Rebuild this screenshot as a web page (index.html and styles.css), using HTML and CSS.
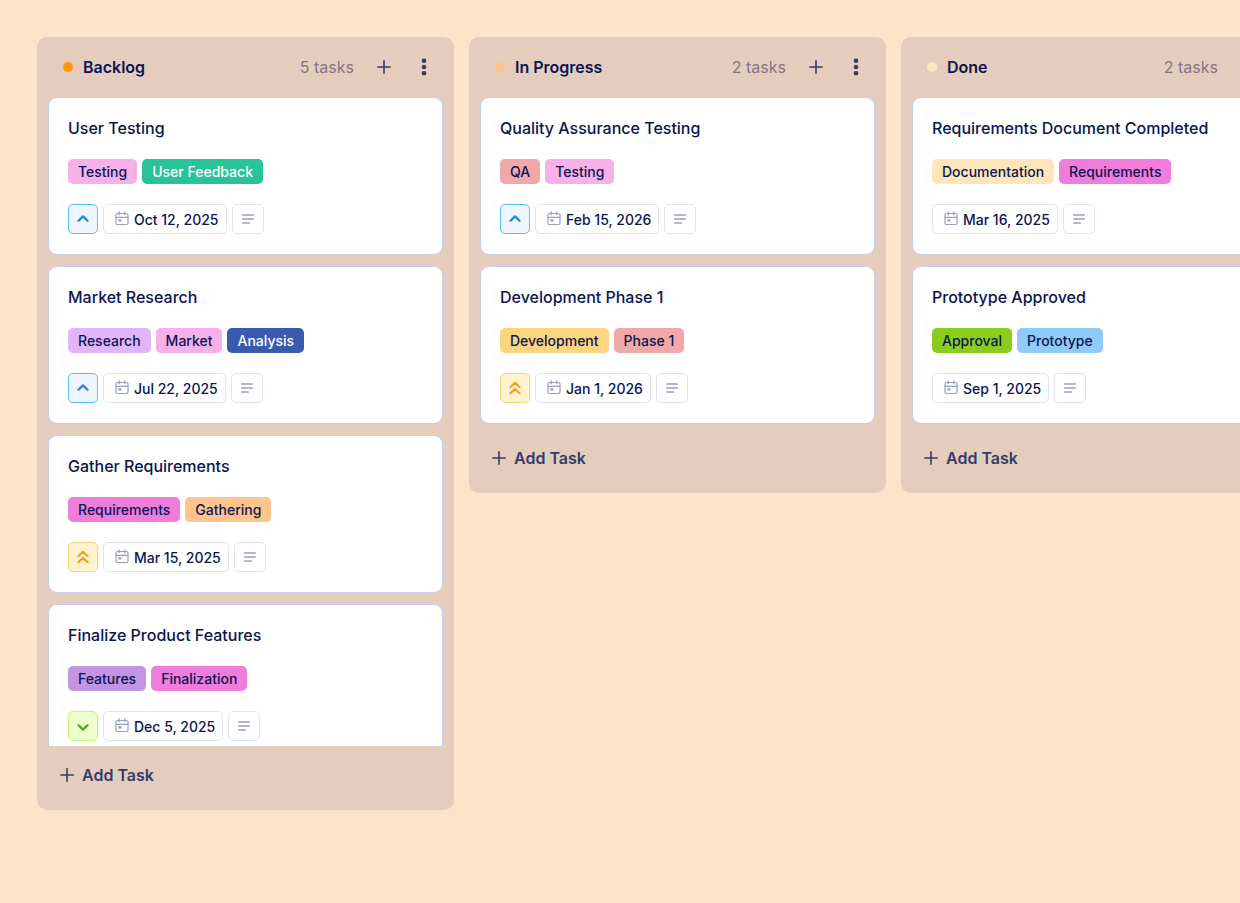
FILE: index.html
```html
<!DOCTYPE html>
<html lang="en">
<head>
    <meta charset="UTF-8">
    <meta name="viewport" content="width=device-width, initial-scale=1.0">
    <title>Task Board</title>
    <link rel="stylesheet" href="styles.css">
</head>
<body>
    <!-- shared icons -->
    <svg class="sprite" aria-hidden="true">
        <symbol id="plus" viewBox="0 0 14 14"><path d="M7 .8v12.4M.8 7h12.4" stroke="currentColor" stroke-width="1.6" stroke-linecap="round"/></symbol>
        <symbol id="dots" viewBox="0 0 6 18"><g fill="currentColor"><circle cx="3" cy="2.8" r="2.3"/><circle cx="3" cy="9" r="2.3"/><circle cx="3" cy="15.2" r="2.3"/></g></symbol>
        <symbol id="up" viewBox="0 0 14 14"><path d="M2.5 8.7 7 4.4l4.5 4.3" fill="none" stroke="currentColor" stroke-width="2.2" stroke-linecap="round" stroke-linejoin="round"/></symbol>
        <symbol id="down" viewBox="0 0 14 14"><path d="M2.5 6.3 7 10.6l4.5-4.3" fill="none" stroke="currentColor" stroke-width="2.2" stroke-linecap="round" stroke-linejoin="round"/></symbol>
        <symbol id="double-up" viewBox="0 0 14 14"><path d="M2.4 6.1 7 1.8l4.6 4.3M2.4 12.3 7 8l4.6 4.3" fill="none" stroke="currentColor" stroke-width="1.9" stroke-linecap="round" stroke-linejoin="round"/></symbol>
        <symbol id="calendar" viewBox="0 0 14 16"><g fill="none" stroke="currentColor" stroke-width="1.2" stroke-linecap="round"><rect x="1" y="2.5" width="12" height="11" rx="1.5"/><path d="M1 6.3h12M4.2 .8v3M9.8 .8v3"/></g><rect x="3.3" y="8.2" width="3.2" height="2.3" rx=".6" fill="currentColor"/></symbol>
        <symbol id="note" viewBox="0 0 12 10"><path d="M.6 1h10.8M.6 5h10.8M.6 9h6.8" stroke="currentColor" stroke-width="1.3" stroke-linecap="round"/></symbol>
    </svg>

    <main class="board">
        <section class="column">
            <header class="column-header">
                <span class="dot dot-backlog"></span>
                <h2>Backlog</h2>
                <span class="count">5 tasks</span>
                <button class="icon-btn" aria-label="Add task"><svg class="icon-plus"><use href="#plus"/></svg></button>
                <button class="icon-btn" aria-label="Column menu"><svg class="icon-dots"><use href="#dots"/></svg></button>
            </header>
            <div class="list">
                <article class="card">
                    <h3>User Testing</h3>
                    <div class="tags">
                        <span class="tag pink">Testing</span>
                        <span class="tag green">User Feedback</span>
                    </div>
                    <div class="meta">
                        <button class="priority medium" aria-label="Medium priority"><svg><use href="#up"/></svg></button>
                        <button class="date"><svg><use href="#calendar"/></svg>Oct 12, 2025</button>
                        <button class="note" aria-label="Description"><svg><use href="#note"/></svg></button>
                    </div>
                </article>
                <article class="card">
                    <h3>Market Research</h3>
                    <div class="tags">
                        <span class="tag lilac">Research</span>
                        <span class="tag pink">Market</span>
                        <span class="tag blue">Analysis</span>
                    </div>
                    <div class="meta">
                        <button class="priority medium" aria-label="Medium priority"><svg><use href="#up"/></svg></button>
                        <button class="date"><svg><use href="#calendar"/></svg>Jul 22, 2025</button>
                        <button class="note" aria-label="Description"><svg><use href="#note"/></svg></button>
                    </div>
                </article>
                <article class="card">
                    <h3>Gather Requirements</h3>
                    <div class="tags">
                        <span class="tag magenta">Requirements</span>
                        <span class="tag orange">Gathering</span>
                    </div>
                    <div class="meta">
                        <button class="priority high" aria-label="High priority"><svg><use href="#double-up"/></svg></button>
                        <button class="date"><svg><use href="#calendar"/></svg>Mar 15, 2025</button>
                        <button class="note" aria-label="Description"><svg><use href="#note"/></svg></button>
                    </div>
                </article>
                <article class="card">
                    <h3>Finalize Product Features</h3>
                    <div class="tags">
                        <span class="tag purple">Features</span>
                        <span class="tag magenta">Finalization</span>
                    </div>
                    <div class="meta">
                        <button class="priority low" aria-label="Low priority"><svg><use href="#down"/></svg></button>
                        <button class="date"><svg><use href="#calendar"/></svg>Dec 5, 2025</button>
                        <button class="note" aria-label="Description"><svg><use href="#note"/></svg></button>
                    </div>
                </article>
            </div>
            <footer class="column-footer">
                <button class="add-btn"><svg class="icon-plus"><use href="#plus"/></svg>Add Task</button>
            </footer>
        </section>

        <section class="column">
            <header class="column-header">
                <span class="dot dot-progress"></span>
                <h2>In Progress</h2>
                <span class="count">2 tasks</span>
                <button class="icon-btn" aria-label="Add task"><svg class="icon-plus"><use href="#plus"/></svg></button>
                <button class="icon-btn" aria-label="Column menu"><svg class="icon-dots"><use href="#dots"/></svg></button>
            </header>
            <div class="list">
                <article class="card">
                    <h3>Quality Assurance Testing</h3>
                    <div class="tags">
                        <span class="tag salmon">QA</span>
                        <span class="tag pink">Testing</span>
                    </div>
                    <div class="meta">
                        <button class="priority medium" aria-label="Medium priority"><svg><use href="#up"/></svg></button>
                        <button class="date"><svg><use href="#calendar"/></svg>Feb 15, 2026</button>
                        <button class="note" aria-label="Description"><svg><use href="#note"/></svg></button>
                    </div>
                </article>
                <article class="card">
                    <h3>Development Phase 1</h3>
                    <div class="tags">
                        <span class="tag yellow">Development</span>
                        <span class="tag salmon">Phase 1</span>
                    </div>
                    <div class="meta">
                        <button class="priority high" aria-label="High priority"><svg><use href="#double-up"/></svg></button>
                        <button class="date"><svg><use href="#calendar"/></svg>Jan 1, 2026</button>
                        <button class="note" aria-label="Description"><svg><use href="#note"/></svg></button>
                    </div>
                </article>
            </div>
            <footer class="column-footer">
                <button class="add-btn"><svg class="icon-plus"><use href="#plus"/></svg>Add Task</button>
            </footer>
        </section>

        <section class="column">
            <header class="column-header">
                <span class="dot dot-done"></span>
                <h2>Done</h2>
                <span class="count">2 tasks</span>
                <button class="icon-btn" aria-label="Add task"><svg class="icon-plus"><use href="#plus"/></svg></button>
                <button class="icon-btn" aria-label="Column menu"><svg class="icon-dots"><use href="#dots"/></svg></button>
            </header>
            <div class="list">
                <article class="card">
                    <h3>Requirements Document Completed</h3>
                    <div class="tags">
                        <span class="tag cream">Documentation</span>
                        <span class="tag magenta">Requirements</span>
                    </div>
                    <div class="meta">
                        <button class="date"><svg><use href="#calendar"/></svg>Mar 16, 2025</button>
                        <button class="note" aria-label="Description"><svg><use href="#note"/></svg></button>
                    </div>
                </article>
                <article class="card">
                    <h3>Prototype Approved</h3>
                    <div class="tags">
                        <span class="tag lime">Approval</span>
                        <span class="tag sky">Prototype</span>
                    </div>
                    <div class="meta">
                        <button class="date"><svg><use href="#calendar"/></svg>Sep 1, 2025</button>
                        <button class="note" aria-label="Description"><svg><use href="#note"/></svg></button>
                    </div>
                </article>
            </div>
            <footer class="column-footer">
                <button class="add-btn"><svg class="icon-plus"><use href="#plus"/></svg>Add Task</button>
            </footer>
        </section>
    </main>
</body>
</html>
```
FILE: styles.css
```css
* {
    box-sizing: border-box;
}

body {
    margin: 0;
    background-color: #fee3cb;
    color: #0a1551;
    font-family: Inter, "Liberation Sans", sans-serif;
}

h2, h3 {
    margin: 0;
}

button {
    padding: 0;
    border: 0;
    background: none;
    color: inherit;
    font-family: inherit;
    cursor: pointer;
}

svg {
    display: block;
    flex: none;
}

.sprite {
    display: none;
}

.board {
    display: flex;
    align-items: flex-start;
    gap: 15px;
    height: 100vh;
    padding: 37px;
    overflow-x: auto;
    scrollbar-width: none;
}

/* column */
.column {
    display: flex;
    flex-direction: column;
    flex: 0 0 417px;
    max-height: calc(100vh - 130px);
    border-radius: 10px;
    background-color: #e5cdbe;
}

.column-header {
    display: flex;
    align-items: center;
    flex: none;
    gap: 12px;
    height: 60px;
    padding: 0 16px 0 26px;
}

.column-header h2 {
    flex: 1;
    margin-left: -2px;
    font-size: 16px;
    font-weight: 600;
    line-height: 20px;
}

.dot {
    width: 10px;
    height: 10px;
    border-radius: 50%;
}

.dot-backlog { background-color: #ff9414; }
.dot-progress { background-color: #ffc48c; }
.dot-done { background-color: #ffe6ba; }

.count {
    margin-right: 4px;
    color: #857584;
    font-size: 16px;
    line-height: 20px;
}

.icon-btn {
    display: flex;
    align-items: center;
    justify-content: center;
    width: 28px;
    height: 28px;
    color: #343c6a;
}

.icon-plus {
    width: 14px;
    height: 14px;
}

.icon-dots {
    width: 6px;
    height: 18px;
}

.list {
    display: flex;
    flex-direction: column;
    gap: 11px;
    min-height: 0;
    padding: 0 11px 5px;
    overflow-y: auto;
    scrollbar-width: none;
}

.column-footer {
    flex: none;
    height: 64px;
    padding: 14px 23px;
}

.add-btn {
    display: flex;
    align-items: center;
    gap: 8px;
    height: 30px;
    color: #343c6a;
    font-size: 16px;
    font-weight: 600;
}

/* card */
.card {
    display: flex;
    flex-direction: column;
    flex: none;
    gap: 20px;
    padding: 20px 19px;
    border: 1px solid #c8ceed;
    border-radius: 9px;
    background-color: #fff;
}

.card h3 {
    font-size: 16px;
    font-weight: 500;
    line-height: 21px;
}

.tags, .meta {
    display: flex;
    gap: 5px;
}

.tag {
    padding: 0 10px;
    border-radius: 5px;
    font-size: 14px;
    font-weight: 500;
    line-height: 25px;
}

.pink { background-color: #f6b1ea; }
.green { background-color: #28c397; color: #fff; }
.lilac { background-color: #e0b5fc; }
.blue { background-color: #385bb0; color: #fff; }
.magenta { background-color: #f07cdc; }
.orange { background-color: #ffc48c; }
.purple { background-color: #c393e4; }
.salmon { background-color: #f1a8a8; }
.yellow { background-color: #ffd47e; }
.cream { background-color: #ffe6ba; }
.lime { background-color: #8bcc1c; }
.sky { background-color: #8fcbfa; }

.priority, .date, .note {
    display: flex;
    align-items: center;
    justify-content: center;
    height: 30px;
    border: 1px solid #e0e3f5;
    border-radius: 5px;
}

.priority {
    width: 30px;
}

.priority svg {
    width: 14px;
    height: 14px;
}

.medium {
    border-color: #58bdf8;
    background-color: #edf7ff;
    color: #2a7de1;
}

.high {
    border-color: #ffd47e;
    background-color: #fff3cd;
    color: #ff9414;
}

.low {
    border-color: #c5f57c;
    background-color: #eaffcb;
    color: #55a50c;
}

.date {
    gap: 5px;
    padding: 0 7px 0 11px;
    font-size: 14px;
    font-weight: 500;
}

.date svg {
    width: 14px;
    height: 16px;
    color: #979dc6;
}

.note {
    width: 32px;
}

.note svg {
    width: 12px;
    height: 10px;
    color: #979dc6;
}
```
